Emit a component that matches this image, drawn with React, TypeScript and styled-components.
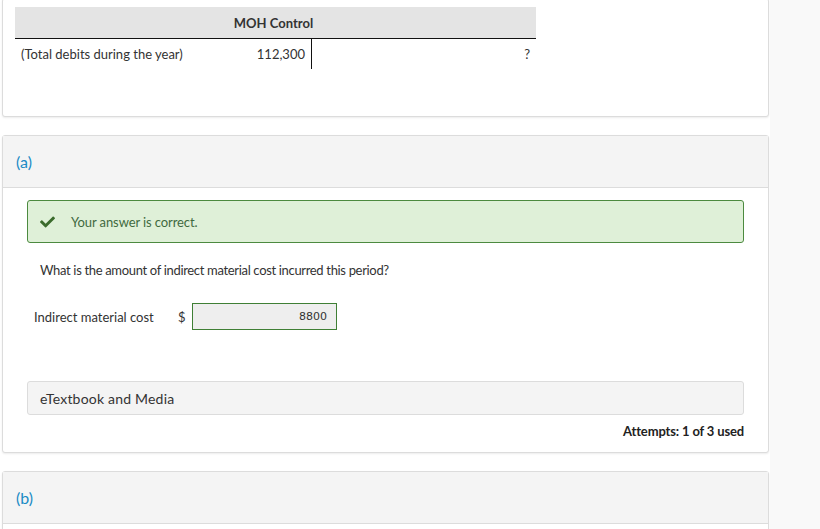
import React from 'react';
import styled, { createGlobalStyle } from 'styled-components';

const GlobalStyle = createGlobalStyle`
  html, body {
    margin: 0;
    padding: 0;
    background: #f9f9f9;
    font-family: Lato, "Open Sans", "Liberation Sans", sans-serif;
    color: #333;
  }
`;

const Page = styled.div`
  width: 770px;
  height: 529px;
  background: #fff;
  box-sizing: border-box;
  padding: 0 1px 0 2px;
  display: flex;
  flex-direction: column;
  gap: 18px;
  overflow: hidden;
`;

const Card = styled.div`
  flex-shrink: 0;
  border: 1px solid #dcdcdc;
  border-radius: 3px;
  background: #fff;
  box-shadow: 0 1px 2px rgba(0, 0, 0, 0.08);
  box-sizing: border-box;
`;

const TopCard = styled(Card)`
  margin-top: -2px;
  height: 119px;
  padding: 8px 12px 0;
`;

const TTable = styled.div`
  width: 521px;
  font-size: 13px;
`;

const THeader = styled.div`
  height: 31px;
  background: #e4e4e4;
  border-bottom: 1px solid #111;
  display: flex;
  align-items: center;
  justify-content: center;
  font-weight: 700;
  color: #333;
  padding-right: 4px;
`;

const TRow = styled.div`
  display: grid;
  grid-template-columns: 297px 1fr;
  height: 30px;
`;

const TCell = styled.div<{ $divider?: boolean }>`
  display: flex;
  align-items: center;
  justify-content: space-between;
  padding: 0 6px;
  margin-top: -1px;
  ${p => p.$divider && 'border-right: 1px solid #111;'}
`;

const TCellRight = styled(TCell)`
  justify-content: flex-end;
`;

const SectionHeader = styled.div`
  height: 51px;
  background: #f4f4f4;
  border-bottom: 1px solid #dcdcdc;
  display: flex;
  align-items: center;
  padding-left: 13px;
  font-size: 16px;
  color: #1b8bc5;
`;

const Body = styled.div`
  padding: 12px 24px 13px 24px;
  display: flex;
  flex-direction: column;
`;

const Alert = styled.div`
  height: 43px;
  box-sizing: border-box;
  background: #dff0d8;
  border: 1px solid #4c8a3f;
  border-radius: 3px;
  display: flex;
  align-items: center;
  padding-left: 12px;
  gap: 16px;
  font-size: 13px;
  color: #3f6a3f;
  letter-spacing: -0.1px;
`;

const Question = styled.div`
  margin-top: 19px;
  padding-left: 13px;
  font-size: 13px;
  letter-spacing: -0.33px;
  color: #333;
`;

const AnswerRow = styled.div`
  margin-top: 25px;
  padding-left: 7px;
  display: flex;
  align-items: center;
  font-size: 13px;
`;

const Label = styled.span`
  width: 144px;
`;

const Dollar = styled.span`
  width: 14px;
`;

const AnswerInput = styled.div`
  width: 145px;
  height: 27px;
  box-sizing: border-box;
  background: #eeeeee;
  border: 1px solid #3f7f35;
  display: flex;
  align-items: center;
  justify-content: flex-end;
  padding-right: 9px;
  font-family: "DejaVu Sans", "Liberation Sans", sans-serif;
  font-size: 11px;
  color: #333;
`;

const Media = styled.div`
  margin-top: 51px;
  height: 34px;
  box-sizing: border-box;
  background: #f4f4f4;
  border: 1px solid #dcdcdc;
  border-radius: 3px;
  display: flex;
  align-items: center;
  padding-left: 12px;
  font-size: 14px;
  color: #333;
  letter-spacing: 0.2px;
`;

const Attempts = styled.div`
  margin-top: 8px;
  text-align: right;
  font-size: 13px;
  font-weight: 700;
  color: #222;
  letter-spacing: -0.15px;
`;

const CheckIcon = () => (
  <svg width="15" height="13" viewBox="0 0 512 420" fill="#3a6b2c">
    <path d="M173.9 410.4L7.5 244c-10-10-10-26.2 0-36.2l36.2-36.2c10-10 26.2-10 36.2 0L192 283.7 432.1 43.6c10-10 26.2-10 36.2 0l36.2 36.2c10 10 10 26.2 0 36.2L210.1 410.4c-10 10-26.2 10-36.2 0z" />
  </svg>
);

export default function App() {
  return (
    <>
      <GlobalStyle />
      <Page>
        <TopCard>
          <TTable>
            <THeader>MOH Control</THeader>
            <TRow>
              <TCell $divider>
                <span>(Total debits during the year)</span>
                <span>112,300</span>
              </TCell>
              <TCellRight>?</TCellRight>
            </TRow>
          </TTable>
        </TopCard>

        <Card>
          <SectionHeader>(a)</SectionHeader>
          <Body>
            <Alert>
              <CheckIcon />
              <span>Your answer is correct.</span>
            </Alert>
            <Question>What is the amount of indirect material cost incurred this period?</Question>
            <AnswerRow>
              <Label>Indirect material cost</Label>
              <Dollar>$</Dollar>
              <AnswerInput>8800</AnswerInput>
            </AnswerRow>
            <Media>eTextbook and Media</Media>
            <Attempts>Attempts: 1 of 3 used</Attempts>
          </Body>
        </Card>

        <Card>
          <SectionHeader>(b)</SectionHeader>
          <Body />
        </Card>
      </Page>
    </>
  );
}
